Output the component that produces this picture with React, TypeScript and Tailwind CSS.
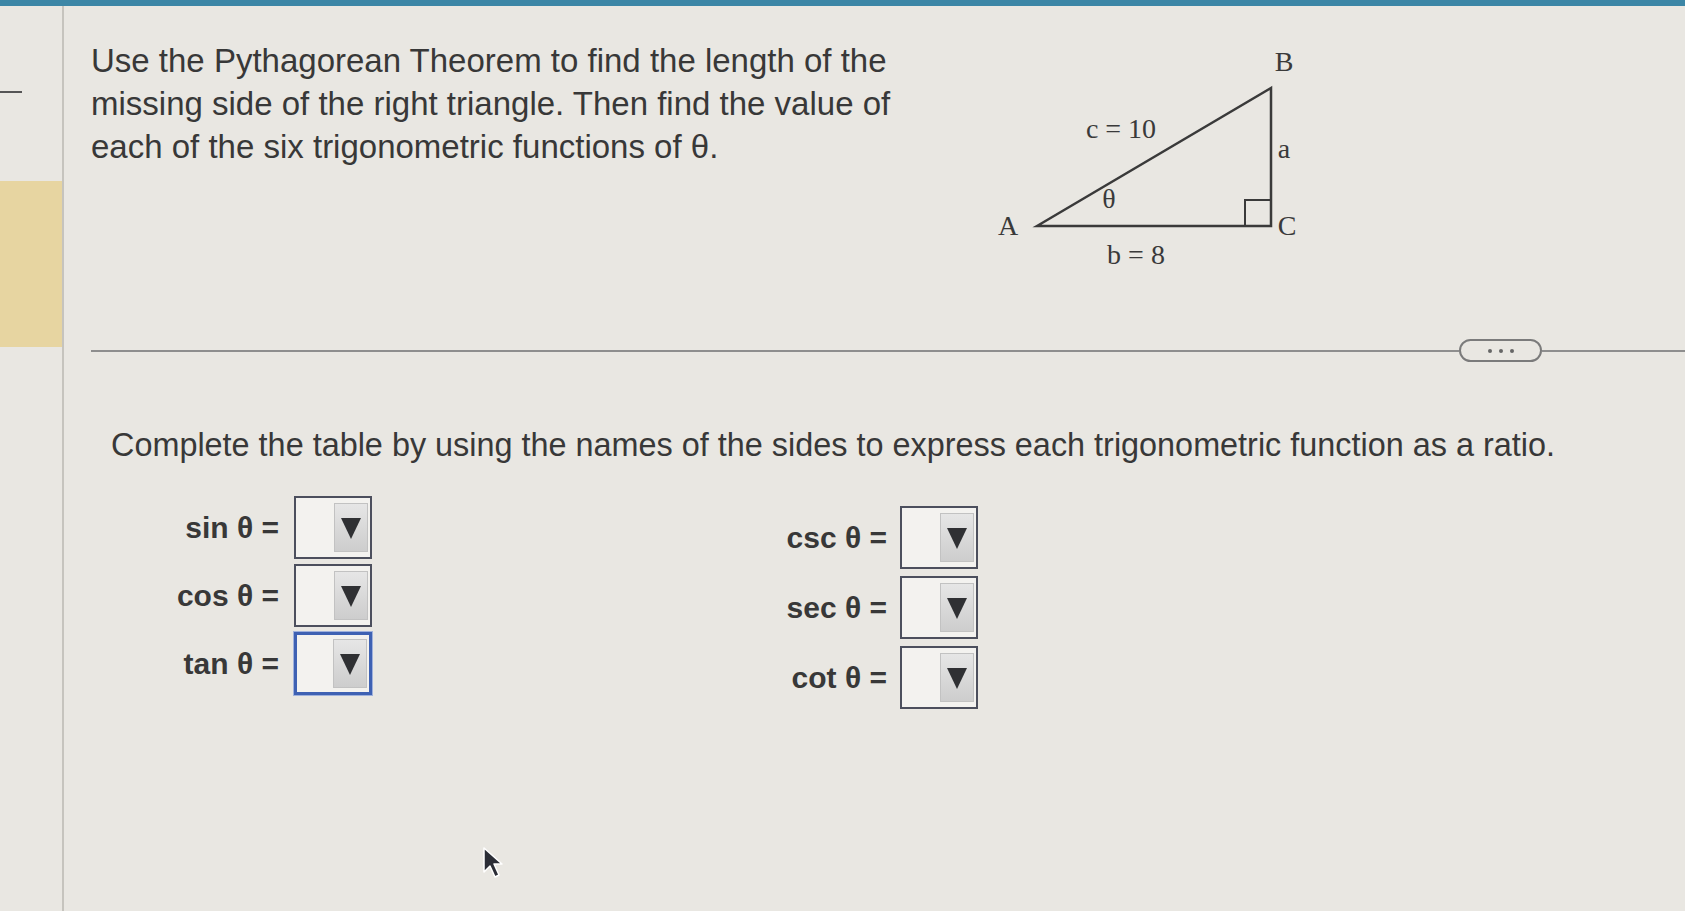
import React from 'react';

const leftRows = ['sin', 'cos', 'tan'];
const rightRows = ['csc', 'sec', 'cot'];

function DropBox({ focused = false }: { focused?: boolean }) {
  return (
    <div
      className={
        focused
          ? 'flex h-[63px] w-[78px] justify-end border-[3px] border-[#3e61b3] bg-[#f3f2ef] py-[4px] pr-[2px] shadow-[0_0_0_1px_#9fb1dc]'
          : 'flex h-[63px] w-[78px] justify-end border-2 border-[#4c4f5d] bg-[#f3f2ef] py-[5px] pr-[2px]'
      }
    >
      <div className="flex w-[34px] items-center justify-center border border-[#c2c2c2] bg-linear-to-b from-[#e6e6e6] to-[#cdcdcd]">
        <svg width="22" height="24" viewBox="0 0 22 24">
          <path d="M1 2 H21 L11 23 Z" fill="#2f3033" />
        </svg>
      </div>
    </div>
  );
}

function Triangle() {
  // right triangle with labelled vertices and sides
  return (
    <svg width="330" height="240" viewBox="0 0 330 240" className="mt-[1px] ml-[69px] shrink-0">
      <path d="M47 186 L281 48 L281 186 Z" fill="none" stroke="#3a3a3a" strokeWidth="2.5" strokeLinejoin="miter" />
      <path d="M255 186 V160 H281" fill="none" stroke="#3a3a3a" strokeWidth="2" />
      <g fontFamily="'Liberation Serif', 'Times New Roman', serif" fontSize="28" fill="#3a3a3a" textAnchor="middle">
        <text x="294" y="31">B</text>
        <text x="131" y="98">c = 10</text>
        <text x="294" y="118">a</text>
        <text x="119" y="168">θ</text>
        <text x="18" y="195">A</text>
        <text x="297" y="195">C</text>
        <text x="146" y="224">b = 8</text>
      </g>
    </svg>
  );
}

export default function App() {
  return (
    <div className="relative h-[911px] w-[1685px] overflow-hidden bg-[#e9e7e2] font-['Liberation_Sans',Arial,sans-serif] text-[#383838]">
      <div className="h-[6px] bg-[#3c86a6]" />

      <div className="flex h-[905px]">
        {/* sidebar */}
        <aside className="flex w-[64px] shrink-0 flex-col border-r-2 border-[#c6c4be]">
          <div className="mt-[85px] h-[2px] w-[22px] bg-[#555]" />
          <div className="mt-[88px] h-[166px] bg-[#e7d5a1]" />
        </aside>

        <main className="flex flex-1 flex-col pl-[27px]">
          {/* question */}
          <div className="flex h-[333px] items-start pt-[33px]">
            <p className="w-[830px] shrink-0 whitespace-nowrap text-[33px] leading-[43px]">
              Use the Pythagorean Theorem to find the length of the
              <br />
              missing side of the right triangle. Then find the value of
              <br />
              each of the six trigonometric functions of θ.
            </p>
            <Triangle />
          </div>

          {/* divider */}
          <div className="flex h-[23px] items-center">
            <div className="h-[2px] flex-1 bg-[#8e8e8e]" />
            <div className="flex h-[23px] w-[83px] items-center justify-center gap-[7px] rounded-full border-2 border-[#7b7b7b]">
              <span className="h-[4px] w-[4px] rounded-full bg-[#666]" />
              <span className="h-[4px] w-[4px] rounded-full bg-[#666]" />
              <span className="h-[4px] w-[4px] rounded-full bg-[#666]" />
            </div>
            <div className="h-[2px] w-[143px] bg-[#8e8e8e]" />
          </div>

          <p className="mt-[62px] ml-[20px] whitespace-nowrap text-[32.4px] leading-[43px]">
            Complete the table by using the names of the sides to express each trigonometric function as a ratio.
          </p>

          {/* table */}
          <div className="mt-[29px] ml-[20px] flex items-start">
            <div className="flex flex-col gap-[5px]">
              {leftRows.map((fn) => (
                <div key={fn} className="flex items-center gap-[15px]">
                  <span className="w-[168px] text-right text-[30px] font-bold">{fn} θ =</span>
                  <DropBox focused={fn === 'tan'} />
                </div>
              ))}
            </div>
            <div className="mt-[10px] ml-[347px] flex flex-col gap-[7px]">
              {rightRows.map((fn) => (
                <div key={fn} className="flex items-center gap-[13px]">
                  <span className="w-[168px] text-right text-[30px] font-bold">{fn} θ =</span>
                  <DropBox />
                </div>
              ))}
            </div>
          </div>
        </main>
      </div>

      {/* mouse pointer */}
      <svg className="absolute top-[846px] left-[482px]" width="24" height="34" viewBox="0 0 24 34">
        <path d="M2 2 L2 26 L8 20 L13 31 L17 29 L12 18 L20 18 Z" fill="#2b2d36" stroke="#fff" strokeWidth="1.5" strokeLinejoin="round" />
      </svg>
    </div>
  );
}
